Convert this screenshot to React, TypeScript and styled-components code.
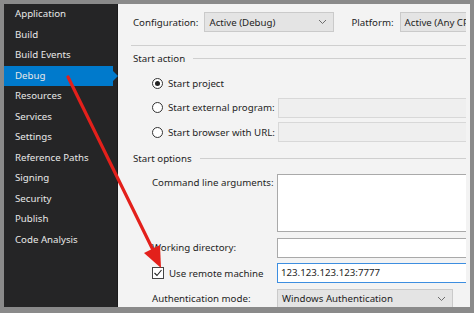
import React from 'react';
import styled, { createGlobalStyle } from 'styled-components';

const GlobalStyle = createGlobalStyle`
    html, body {
        margin: 0;
        padding: 0;
        width: 474px;
        height: 313px;
        overflow: hidden;
        background: #8a8a8a;
    }
    body {
        font-family: 'Noto Sans', 'Open Sans', sans-serif;
        font-size: 9.7px;
    }
`;

const navItems = [
    'Application',
    'Build',
    'Build Events',
    'Debug',
    'Resources',
    'Services',
    'Settings',
    'Reference Paths',
    'Signing',
    'Security',
    'Publish',
    'Code Analysis',
];

const Chevron = () => (
    <svg width="9" height="6" viewBox="0 0 9 6">
        <path d="M1 1 L4.5 4.5 L8 1" fill="none" stroke="#6d6d6d" strokeWidth="1" />
    </svg>
);

const App = () => {
    return (
        <>
            <GlobalStyle />
            <Frame>
                <Window>
                    <SideNav>
                        {navItems.map((item) => (
                            <NavItem key={item} $active={item === 'Debug'}>
                                {item}
                            </NavItem>
                        ))}
                    </SideNav>
                    <MainPanel>
                        <Content>
                            <TopRow>
                                <TopLabel>Configuration:</TopLabel>
                                <Select $width={130}>
                                    <span>Active (Debug)</span>
                                    <Chevron />
                                </Select>
                                <TopLabel $gap={17}>Platform:</TopLabel>
                                <Select $width={130}>
                                    <span>Active (Any CPU)</span>
                                    <Chevron />
                                </Select>
                            </TopRow>
                            <Divider />
                            <SectionHeader>Start action</SectionHeader>
                            <RadioGroup>
                                <RadioRow>
                                    <Choice>
                                        <Radio $checked />
                                        Start project
                                    </Choice>
                                </RadioRow>
                                <RadioRow>
                                    <Choice>
                                        <Radio />
                                        Start external program:
                                    </Choice>
                                    <TextBox $disabled />
                                </RadioRow>
                                <RadioRow>
                                    <Choice>
                                        <Radio />
                                        Start browser with URL:
                                    </Choice>
                                    <TextBox $disabled />
                                </RadioRow>
                            </RadioGroup>
                            <SectionHeader $top={10}>Start options</SectionHeader>
                            <OptionsGrid>
                                <FieldLabel $alignTop>Command line arguments:</FieldLabel>
                                <TextArea />
                                <FieldLabel>Working directory:</FieldLabel>
                                <TextBox />
                                <Choice>
                                    <CheckBox>
                                        <svg width="10" height="10" viewBox="0 0 10 10">
                                            <path d="M1.5 5 L4 7.5 L8.5 2" fill="none" stroke="#222" strokeWidth="1.1" />
                                        </svg>
                                    </CheckBox>
                                    Use remote machine
                                </Choice>
                                <TextBox $focused>123.123.123.123:7777</TextBox>
                                <FieldLabel>Authentication mode:</FieldLabel>
                                <Select $width={176}>
                                    <span>Windows Authentication</span>
                                    <Chevron />
                                </Select>
                            </OptionsGrid>
                        </Content>
                    </MainPanel>
                    <Arrow width="474" height="313" viewBox="0 0 474 313">
                        <line x1="68" y1="77" x2="153" y2="250" stroke="#e3201b" strokeWidth="3.2" strokeLinecap="round" />
                        <polygon points="161,268 144,253 160,245" fill="#e3201b" />
                    </Arrow>
                </Window>
            </Frame>
        </>
    );
};

export default App;

const Frame = styled.div`
    width: 474px;
    height: 313px;
    box-sizing: border-box;
    padding: 4px 4px 6px 4px;
`;

const Window = styled.div`
    position: relative;
    display: flex;
    height: 100%;
    background: #f3f3f3;
`;

const SideNav = styled.div`
    width: 113px;
    flex-shrink: 0;
    background: #252526;
    border-right: 1px solid #1b1b1c;
    display: flex;
    flex-direction: column;
`;

const NavItem = styled.div<{ $active?: boolean }>`
    position: relative;
    height: 20.5px;
    line-height: 20.5px;
    padding-left: 11px;
    margin-right: 4px;
    color: #e8e8e8;
    white-space: nowrap;
    background: ${(p) => (p.$active ? '#007acc' : 'transparent')};

    &::after {
        content: '';
        display: ${(p) => (p.$active ? 'block' : 'none')};
        position: absolute;
        right: -5px;
        top: 5px;
        border-left: 5px solid #007acc;
        border-top: 5px solid transparent;
        border-bottom: 5px solid transparent;
    }
`;

const MainPanel = styled.div`
    flex: 1;
    padding-right: 4px;
    min-width: 0;
`;

const Content = styled.div`
    height: 100%;
    overflow: hidden;
    padding: 8px 0 0 13px;
    box-sizing: border-box;
    color: #1e1e1e;
`;

const TopRow = styled.div`
    display: flex;
    align-items: center;
    height: 20px;
    white-space: nowrap;
`;

const TopLabel = styled.span<{ $gap?: number }>`
    flex-shrink: 0;
    margin-left: ${(p) => p.$gap ?? 2}px;
    margin-right: 6px;
`;

const Select = styled.div<{ $width: number }>`
    display: flex;
    align-items: center;
    justify-content: space-between;
    flex-shrink: 0;
    width: ${(p) => p.$width}px;
    height: 20px;
    box-sizing: border-box;
    padding: 0 6px 0 4px;
    background: #e4e4e4;
    border: 1px solid #cacaca;
    white-space: nowrap;
    overflow: hidden;
`;

const Divider = styled.div`
    margin-top: 13px;
    border-top: 1px solid #cfcfcf;
`;

const SectionHeader = styled.div<{ $top?: number }>`
    display: flex;
    align-items: center;
    margin-top: ${(p) => p.$top ?? 6}px;
    padding-left: 2px;
    height: 12px;

    &::after {
        content: '';
        flex: 1;
        margin-left: 8px;
        border-top: 1px solid #cfcfcf;
    }
`;

const RadioGroup = styled.div`
    display: flex;
    flex-direction: column;
    gap: 4.5px;
    margin-top: 9px;
    padding-left: 21px;
`;

const RadioRow = styled.div`
    display: grid;
    grid-template-columns: 126px 1fr;
    height: 20px;
    align-items: center;
`;

const Choice = styled.div`
    display: flex;
    align-items: center;
    gap: 5px;
    white-space: nowrap;
`;

const Radio = styled.span<{ $checked?: boolean }>`
    flex-shrink: 0;
    width: 11px;
    height: 11px;
    box-sizing: border-box;
    border: 1px solid #333;
    border-radius: 50%;
    background: #fff;
    position: relative;

    &::after {
        content: '';
        display: ${(p) => (p.$checked ? 'block' : 'none')};
        position: absolute;
        left: 2px;
        top: 2px;
        width: 5px;
        height: 5px;
        border-radius: 50%;
        background: #222;
    }
`;

const CheckBox = styled.span`
    flex-shrink: 0;
    display: flex;
    align-items: center;
    justify-content: center;
    width: 12px;
    height: 12px;
    box-sizing: border-box;
    border: 1px solid #444;
    background: #fff;
`;

const TextBox = styled.div<{ $disabled?: boolean; $focused?: boolean }>`
    height: 20px;
    box-sizing: border-box;
    padding: 0 3px;
    line-height: 18px;
    background: ${(p) => (p.$disabled ? '#efefef' : '#fff')};
    border: 1px solid ${(p) => (p.$focused ? '#3d8ee0' : p.$disabled ? '#d8d8d8' : '#a9a9a9')};
    border-right: none;
    white-space: nowrap;
`;

const TextArea = styled.div`
    height: 58px;
    box-sizing: border-box;
    background: #fff;
    border: 1px solid #a9a9a9;
    border-right: none;
`;

const OptionsGrid = styled.div`
    display: grid;
    grid-template-columns: 125px 1fr;
    row-gap: 5.5px;
    margin-top: 10px;
    padding-left: 21px;
    align-items: center;
    justify-items: start;

    & > ${TextBox}, & > ${TextArea} {
        justify-self: stretch;
    }
`;

const FieldLabel = styled.div<{ $alignTop?: boolean }>`
    align-self: ${(p) => (p.$alignTop ? 'start' : 'center')};
    padding-top: ${(p) => (p.$alignTop ? 2 : 0)}px;
    white-space: nowrap;
`;

const Arrow = styled.svg`
    position: absolute;
    left: -4px;
    top: -4px;
    pointer-events: none;
`;
